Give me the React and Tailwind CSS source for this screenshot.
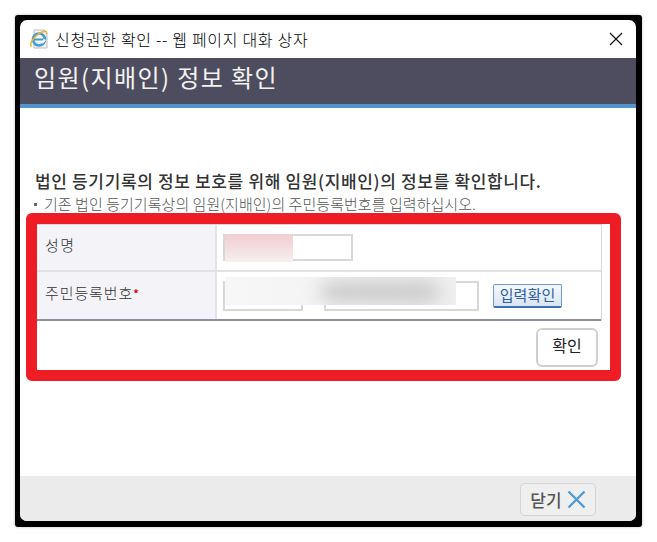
const font = { fontFamily: '"Noto Sans CJK KR", "Noto Sans", sans-serif' };

function IeIcon() {
  return (
    <svg width="20" height="20" viewBox="0 0 20 20" className="shrink-0">
      <path d="M5 1h10l3 3v15H5z" fill="#f4f4f4" stroke="#bdbdbd" strokeWidth="1" />
      <circle cx="10" cy="10.5" r="6" fill="none" stroke="#3f9fdc" strokeWidth="2.6" />
      <path d="M5 10.5h10" stroke="#3f9fdc" strokeWidth="2" />
      <path d="M16 10.5l-3 3.5" stroke="#f4f4f4" strokeWidth="2.4" />
      <path d="M2 17C0.5 13 8 4 15 2.5c2-.4 3 .3 2.5 2" fill="none" stroke="#f0b429" strokeWidth="1.6" strokeLinecap="round" />
    </svg>
  );
}

function Field({ className }) {
  return <div className={`h-full border-2 border-[#d8d8d8] bg-white ${className}`} />;
}

export default function App() {
  return (
    <div className="min-h-[542px] bg-white pt-[15px] pl-[15px]" style={font}>
      <div className="h-[512px] w-[627px] rounded-[3px] bg-black pt-[5px] pr-[6px] pb-[6px] pl-[5px] shadow-[0_0_3px_#bbb]">
        <div className="flex h-full flex-col overflow-hidden rounded-[7px] bg-white">
          {/* title bar */}
          <div className="flex h-[38px] shrink-0 items-center pr-[13px] pl-[9px]">
            <IeIcon />
            <span className="ml-[6px] text-[16px] font-light tracking-[0.7px] text-black">신청권한 확인 -- 웹 페이지 대화 상자</span>
            <svg width="14" height="14" viewBox="0 0 14 14" className="ml-auto">
              <path d="M1 1l12 12M13 1L1 13" stroke="#111" strokeWidth="1.2" />
            </svg>
          </div>

          {/* header */}
          <div className="flex h-[50px] shrink-0 border-b-[4px] border-[#5096cc] bg-[#4e4d5f] pb-[8px] pl-[14px]">
            <h1 className="self-center text-[24px] leading-none font-normal tracking-[1.4px] text-[#f2f2f2]">임원(지배인) 정보 확인</h1>
          </div>

          {/* body */}
          <div className="flex-1 pt-[62px]">
            <p className="ml-[15px] h-[22px] text-[17px] leading-[22px] font-medium tracking-[0.65px] text-[#333]">
              법인 등기기록의 정보 보호를 위해 임원(지배인)의 정보를 확인합니다.
            </p>
            <p className="ml-[14px] flex h-[21px] items-center gap-[7px] pt-[3px] text-[15px] leading-[20px] font-light tracking-[0.05px] whitespace-nowrap text-[#555]">
              <span className="h-[3px] w-[3px] bg-[#666]" />
              기존 법인 등기기록상의 임원(지배인)의 주민등록번호를 입력하십시오.
            </p>

            {/* form */}
            <div className="relative ml-[6px] h-[168px] w-[595px] rounded-[6px] border-[11px] border-[#ee1c25] bg-white">
              <div className="w-[565px] border-t border-r border-[#d8d8d8]">
                <div className="flex h-[47px] border-b-2 border-[#e2e2e2]">
                  <div className="flex w-[180px] items-center border-r-2 border-[#e4e4e4] bg-[#f4f4f8] pb-[4px] pl-[8px] text-[15px] font-light tracking-[1.4px] text-[#333]">
                    성명
                  </div>
                  <div className="relative py-[9px] pl-[6px]">
                    <Field className="w-[130px]" />
                    <div className="absolute top-[9px] left-[8px] h-[28px] w-[68px] bg-linear-to-b from-[#f0cdd0] to-[#f6f0f0]" />
                  </div>
                </div>
                <div className="flex h-[49px] border-b-2 border-[#8e8e9e]">
                  <div className="flex w-[180px] items-center border-r-2 border-[#e4e4e4] bg-[#f4f4f8] pb-[4px] pl-[8px] text-[15px] font-light tracking-[0.9px] text-[#333]">
                    주민등록번호<span className="text-[11px] font-bold text-[#d00]">*</span>
                  </div>
                  <div className="relative flex h-[47px] flex-1 items-center pl-[6px]">
                    <div className="flex h-[30px] gap-[21px]">
                      <Field className="w-[80px]" />
                      <Field className="w-[155px]" />
                    </div>
                    <button className="mt-[1px] ml-[14px] flex h-[24px] w-[69px] items-center justify-center rounded-[2px] border border-b-2 border-[#6f9bd1] border-b-[#3f6fb5] bg-linear-to-b from-[#f6f9fd] to-[#d9e5f4] text-[15px] font-normal tracking-[0.1px] text-[#2f5f9e]">
                      입력확인
                    </button>
                    <div className="absolute top-[5px] left-[8px] h-[28px] w-[231px] overflow-hidden bg-linear-to-r from-[#f7f7f7] to-[#efefef]">
                      <div className="mt-[5px] ml-[95px] h-[20px] w-[120px] rounded-full bg-[#c8c8c8] blur-[9px]" />
                    </div>
                  </div>
                </div>
              </div>
              <div className="flex w-[561px] justify-end pt-[7px]">
                <button className="h-[39px] w-[62px] rounded-[6px] border-2 border-[#cfcfcf] bg-white pb-[5px] text-[16px] font-normal text-[#222]">
                  확인
                </button>
              </div>
            </div>
          </div>

          {/* footer */}
          <div className="flex h-[45px] shrink-0 justify-end bg-[#ebebeb] pt-[7px] pr-[40px]">
            <button className="flex h-[33px] w-[76px] items-center justify-center gap-[5px] rounded-[5px] border border-[#d4d4d4] bg-[#efefef] text-[17px] font-medium text-[#555]">
              닫기
              <svg width="19" height="19" viewBox="0 0 19 19">
                <path d="M1.5 1.5l16 16M17.5 1.5l-16 16" stroke="#4f9bd8" strokeWidth="2.4" />
              </svg>
            </button>
          </div>
        </div>
      </div>
    </div>
  );
}
